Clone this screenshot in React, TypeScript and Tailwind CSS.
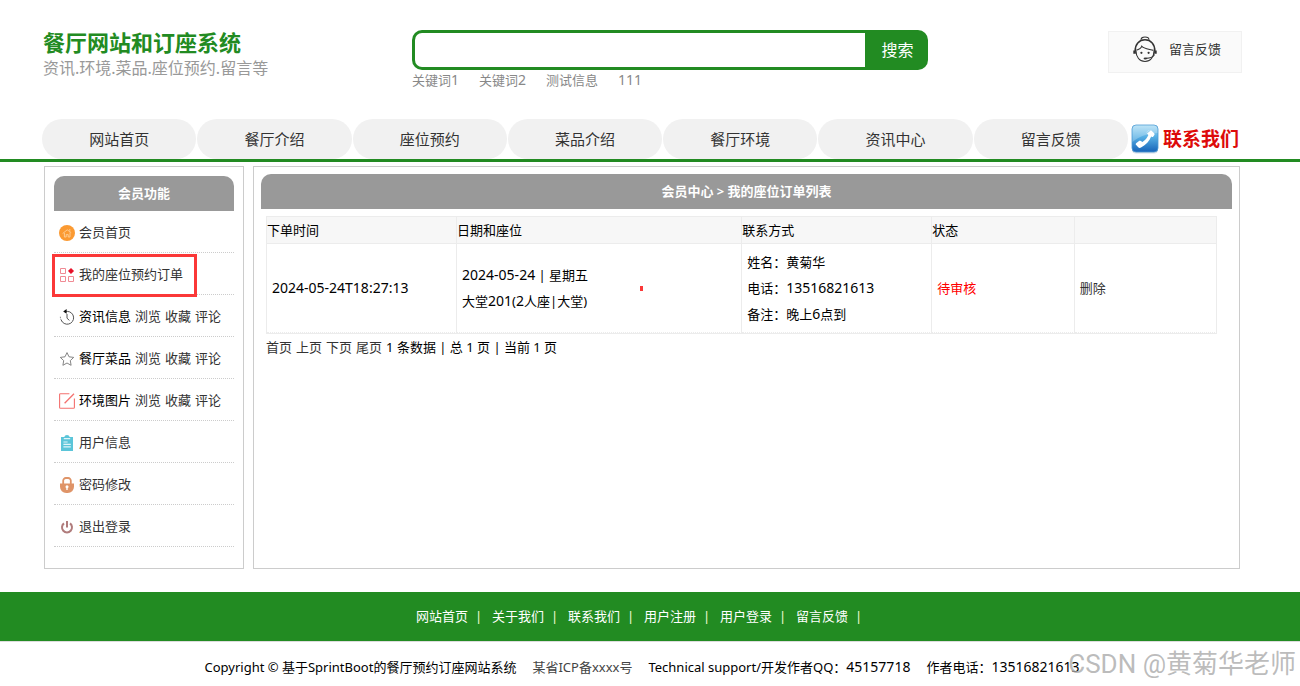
import React, { useState } from 'react';

const navItems = ['网站首页', '餐厅介绍', '座位预约', '菜品介绍', '餐厅环境', '资讯中心', '留言反馈'];
const footerLinks = ['网站首页', '关于我们', '联系我们', '用户注册', '用户登录', '留言反馈'];
const pagerLinks = ['首页', '上页', '下页', '尾页'];

interface MenuItem {
  label: string;
  icon: React.ReactNode;
  actions?: string[];
  marked?: boolean;
}

interface Order {
  createdAt: string;
  date: string;
  weekday: string;
  name: string;
  phone: string;
  status: string;
}

const orders: Order[] = [
  {
    createdAt: '2024-05-24T18:27:13',
    date: '2024-05-24',
    weekday: '星期五',
    name: '黄菊华',
    phone: '13516821613',
    status: '待审核',
  },
];

// Digits run one size up beside the Chinese text
function Num({ children }: { children: React.ReactNode }) {
  return <span className="text-[14px]">{children}</span>;
}

function HomeIcon() {
  return (
    <svg viewBox="0 0 16 16" className="h-4 w-4">
      <circle cx="8" cy="8" r="8" fill="#fb9a32" />
      <path d="M3.6 8.600 8.200 4.800l4 2.800M5.400 8v4h1.800V9.600h2V12h1.800V7.400M10.800 5.800V4" fill="none" stroke="#fdd09a" strokeWidth="0.9" />
    </svg>
  );
}

function GridIcon() {
  return (
    <svg viewBox="0 0 16 16" className="h-4 w-4" fill="none" stroke="#f08a94" strokeWidth="1">
      <path d="M1.5 1.5h5v5h-5zM1.5 9.500h5v5h-5zM9.500 9.500h5v5h-5z" />
      <path d="M12 1.200 14.800 4 12 6.800 9.200 4z" fill="#e60f28" stroke="#e60f28" strokeWidth="0.4" />
    </svg>
  );
}

function HistoryIcon() {
  return (
    <svg viewBox="0 0 16 16" className="h-4 w-4" fill="none" stroke="#555" strokeWidth="1">
      <path d="M5.5 2.4h2.8A6.4 6.4 0 1 1 2.2 11" />
      <path d="M1.4 7.8a6.4 6.4 0 0 0 .8 3.2" strokeDasharray="1 1" />
      <path d="M8 5v4.2l2.4 2.2" />
      <path d="M7.6 0v4.8L4.2 2.4z" fill="#111" stroke="none" />
    </svg>
  );
}

function StarIcon() {
  return (
    <svg viewBox="0 0 16 16" className="h-4 w-4" fill="none" stroke="#777" strokeWidth="0.9" strokeLinejoin="round">
      <path d="m8 1.6 2 4.2 4.7.6-3.4 3.2.8 4.700L8 12l-4.100 2.300.8-4.700L1.300 6.400 6 5.800z" />
    </svg>
  );
}

function EditIcon() {
  return (
    <svg viewBox="0 0 16 16" className="h-4 w-4" fill="none" stroke="#f4716f" strokeWidth="1.1">
      <path d="M10.4.7H1.5a.9.9 0 0 0-.9.9v12.8c0 .5.4.9.9.9h13c.5 0 .9-.4.9-.9V5.6" />
      <path d="M5.6 10.2 15 .8" strokeWidth="1.3" />
    </svg>
  );
}

function ClipboardIcon() {
  return (
    <svg viewBox="0 0 16 16" className="h-4 w-4">
      <path d="M2 2h3.4C5.600.8 6.600 0 8 0s2.400.8 2.600 2H14v14H2z" fill="#5bc5d9" />
      <path d="M4.800 3.600h6.400M4.400 7h4.200M4.400 9.400h7.400M4.400 11.900h7.400" stroke="#dff5f9" strokeWidth="1.1" />
    </svg>
  );
}

function LockIcon() {
  return (
    <svg viewBox="0 0 16 16" className="h-4 w-4">
      <path d="M4.200 7.400V3.600A2.600 2.600 0 0 1 6.800 1h2.400a2.600 2.600 0 0 1 2.600 2.600v3.800" fill="none" stroke="#df9468" strokeWidth="1.8" />
      <path d="M1 6.600h14v3.200a6.200 6.200 0 0 1-6.200 6.200H7.200A6.200 6.200 0 0 1 1 9.800z" fill="#df9468" />
      <circle cx="8" cy="9.800" r="1.500" fill="#fff" />
      <path d="M7.300 10h1.400v3H7.300z" fill="#fff" />
    </svg>
  );
}

function PowerIcon() {
  return (
    <svg viewBox="0 0 16 16" className="h-4 w-4" fill="none" stroke="#b07c7c" strokeWidth="2">
      <path d="M5 4.400a5 5 0 1 0 6 0M8 2v6.400" />
    </svg>
  );
}

function ServiceIcon() {
  return (
    <svg viewBox="0 0 24 28" className="h-7 w-6" fill="none" stroke="#333" strokeWidth="1.1">
      <path d="M8 3.800C8 2 9.800 1 12 1s4 1 4 2.800" />
      <path d="M2.200 15C2 8.400 6 3.800 12 3.800S22 8.400 21.800 15" strokeWidth="1.5" />
      <path d="M3 15c0 6 3.600 10.500 9 10.500S21 21 21 15" />
      <path d="M3.200 14.200c3-.6 5-2.200 5.600-4 1.600 2.400 6.600 2.800 11.800 4.200" />
      <path d="M1.600 14.400v3.400M22.400 14.400v3.400" strokeWidth="2.6" />
      <path d="M21.600 18.500c-1.500 2.600-5 3.800-8.600 3.900" />
      <circle cx="8.400" cy="16.800" r="1.1" fill="#333" stroke="none" />
      <circle cx="15.600" cy="16.800" r="1.1" fill="#333" stroke="none" />
      <ellipse cx="12.300" cy="22.500" rx="1.7" ry="1" fill="#333" stroke="none" />
    </svg>
  );
}

function PhoneIcon() {
  return (
    <svg viewBox="0 0 28 30" className="h-[30px] w-7">
      <defs>
        <linearGradient id="phoneBg" x1="0" y1="0" x2="0" y2="1">
          <stop offset="0" stopColor="#a9dcf5" />
          <stop offset="0.45" stopColor="#55aee3" />
          <stop offset="1" stopColor="#1763b8" />
        </linearGradient>
      </defs>
      <rect x="1" y="2.5" width="26" height="27" rx="4" fill="#d3dbe6" />
      <rect x="1" y="1" width="26" height="27" rx="4" fill="url(#phoneBg)" stroke="#4d9bd3" strokeWidth="0.8" />
      <path d="M1.500 5a4 4 0 0 1 4-3.600h17a4 4 0 0 1 4 3.600v4C17 9.500 8 12 1.500 18z" fill="#fff" opacity="0.25" />
      {/* handset: earpiece top right, mouthpiece bottom left */}
      <path
        d="M16 9.500c-.6-.8-.5-1.500.2-2.100l1.600-1.200c.7-.5 1.500-.4 2 .2M20.200 12.600c.7.500 1.500.5 2.100-.2l1-1.500c.5-.8.300-1.500-.4-2l-2.600-2.400c-.8-.7-1.700-.7-2.500-.1l-1.600 1.300c-.6.600-.6 1.400 0 2l1.200 1.300c-1.200 2.900-3.200 5.200-6 6.900l-1.500-.9c-.8-.4-1.500-.3-2.200.2l-2.300 1.700c-.8.6-.9 1.500-.2 2.200l2 2.100c.8.800 1.800.9 2.800.3 5-2.700 8.400-6.200 10.200-10.900z"
        fill="#fff"
      />
    </svg>
  );
}

const menuItems: MenuItem[] = [
  { label: '会员首页', icon: <HomeIcon /> },
  { label: '我的座位预约订单', icon: <GridIcon />, marked: true },
  { label: '资讯信息', icon: <HistoryIcon />, actions: ['浏览', '收藏', '评论'] },
  { label: '餐厅菜品', icon: <StarIcon />, actions: ['浏览', '收藏', '评论'] },
  { label: '环境图片', icon: <EditIcon />, actions: ['浏览', '收藏', '评论'] },
  { label: '用户信息', icon: <ClipboardIcon /> },
  { label: '密码修改', icon: <LockIcon /> },
  { label: '退出登录', icon: <PowerIcon /> },
];

function Header() {
  const [keyword, setKeyword] = useState('');

  return (
    <header className="border-b-[3px] border-[#228b22] pr-4">
      <div className="mx-auto max-w-[1200px]">
        <div className="flex h-[119px] items-start pt-[30px]">
          <div className="w-[370px] pl-px">
            <h1 className="text-[22px] font-bold leading-6 text-[#228b22]">餐厅网站和订座系统</h1>
            <p className="text-[16px] leading-7 text-[#999]">资讯.环境.菜品.座位预约.留言等</p>
          </div>
          <div>
            <form className="flex h-10" onSubmit={(e) => e.preventDefault()}>
              <input
                type="text"
                aria-label="搜索"
                value={keyword}
                onChange={(e) => setKeyword(e.target.value)}
                className="w-[453px] rounded-l-[10px] border-[3px] border-r-0 border-[#228b22] px-2 text-[14px] outline-none"
              />
              <button type="submit" className="w-[63px] rounded-r-[10px] bg-[#228b22] pl-0.5 text-[16px] text-white">
                搜索
              </button>
            </form>
            <div className="flex gap-5 leading-5 text-[#888]">
              <a href="#">关键词<Num>1</Num></a>
              <a href="#">关键词<Num>2</Num></a>
              <a href="#">测试信息</a>
              <a href="#"><Num>111</Num></a>
            </div>
          </div>
          <a
            href="#"
            className="mt-px ml-auto flex h-[42px] w-[134px] items-center gap-3 border border-[#f1f1f1] bg-[#fafafa] pb-1 pl-6 text-[#333]"
          >
            <ServiceIcon />
            留言反馈
          </a>
        </div>
        <nav className="flex h-10">
          <div className="flex flex-1 gap-px text-[15px] text-[#333]">
            {navItems.map((item) => (
              <a key={item} href="#" className="flex flex-1 items-center justify-center rounded-full bg-[#f1f1f1]">
                {item}
              </a>
            ))}
          </div>
          <a href="#" className="flex w-[114px] items-center gap-1 pl-[3px] text-[19px] font-bold text-[#dd0a0a]">
            <PhoneIcon />
            联系我们
          </a>
        </nav>
      </div>
    </header>
  );
}

function Sidebar() {
  return (
    <aside className="w-[200px] border border-[#ccc] p-[9px] pb-[21px]">
      <h2 className="rounded-t-[10px] bg-[#999] text-center font-bold leading-[35px] text-white">会员功能</h2>
      <ul>
        {menuItems.map(({ label, icon, actions, marked }) => (
          <li key={label} className="relative flex h-[42px] items-center gap-1 border-b border-dotted border-[#ccc] pt-[3px] pl-[5px]">
            {icon}
            {actions ? (
              <>
                <span className="text-black">{label}</span>
                {actions.map((action) => (
                  <a key={action} href="#" className="text-[#333]">{action}</a>
                ))}
              </>
            ) : (
              <a href="#" className="text-[#333]">{label}</a>
            )}
            {marked && <span className="absolute top-px -left-0.5 h-[43px] w-[145px] border-[3px] border-[#fb3838]" />}
          </li>
        ))}
      </ul>
    </aside>
  );
}

function OrderTable() {
  return (
    <table className="w-[99%] table-fixed border-separate border-spacing-0 border border-r-0 border-[#ececec] leading-[26px] text-black">
      <thead>
        <tr className="bg-[#f7f7f7] text-left [&>th]:border-r [&>th]:border-b [&>th]:border-[#ececec] [&>th]:font-normal">
          <th className="w-[20%]">下单时间</th>
          <th className="w-[30%]">日期和座位</th>
          <th className="w-[20%]">联系方式</th>
          <th className="w-[15%]">状态</th>
          <th className="w-[15%]" aria-label="操作" />
        </tr>
      </thead>
      <tbody>
        {orders.map((order) => (
          <tr
            key={order.createdAt}
            className="[&>td]:border-r [&>td]:border-b [&>td]:border-[#ececec] [&>td]:[border-bottom-style:dotted] [&>td]:p-[5px]"
          >
            <td><Num>{order.createdAt}</Num></td>
            <td className="relative">
              <Num>{order.date}</Num> | {order.weekday}
              <br />
              大堂<Num>201</Num>(<Num>2</Num>人座|大堂)
              <span className="absolute top-[42px] right-[98px] h-[5px] w-[3px] bg-[#fb3838]" />
            </td>
            <td>
              <p>姓名：{order.name}</p>
              <p>电话：<Num>{order.phone}</Num></p>
              <p>备注：晚上<Num>6</Num>点到</p>
            </td>
            <td className="text-[#f00]">{order.status}</td>
            <td><a href="#" className="text-[#333]">删除</a></td>
          </tr>
        ))}
      </tbody>
    </table>
  );
}

function Content() {
  return (
    <section className="flex-1 border border-[#ccc] p-[7px]">
      <h2 className="rounded-t-[10px] bg-[#999] text-center font-bold leading-[35px] text-white">会员中心 &gt; 我的座位订单列表</h2>
      <div className="px-[5px] pt-[7px]">
        <OrderTable />
        <div className="flex gap-1 leading-[26px] text-black">
          {pagerLinks.map((link) => (
            <a key={link} href="#" className="text-[#333]">{link}</a>
          ))}
          <span>1 条数据 | 总 1 页 | 当前 1 页</span>
        </div>
      </div>
    </section>
  );
}

function Footer() {
  return (
    <footer>
      <div className="flex h-[50px] items-center justify-center border-b border-[#ddd] bg-[#228b22] pr-3 text-white">
        {footerLinks.map((link) => (
          <span key={link} className="flex w-[76px] gap-[7px]">
            <a href="#">{link}</a>
            <span className="text-[#fafad2]">|</span>
          </span>
        ))}
      </div>
      <div className="flex justify-center gap-4 pt-3 pr-4 leading-[26px] text-black">
        <span>Copyright © 基于SprintBoot的餐厅预约订座网站系统</span>
        <a href="#" className="text-[#444]">某省ICP备xxxx号</a>
        <span>Technical support/开发作者QQ：<Num>45157718</Num></span>
        <span>作者电话：<Num>13516821613</Num></span>
      </div>
    </footer>
  );
}

export default function App() {
  return (
    <div className="relative min-h-screen overflow-hidden bg-white font-['Noto_Sans','Noto_Sans_CJK_SC',sans-serif] text-[13px]">
      <Header />
      <main className="pt-1 pr-4 pb-[23px]">
        <div className="mx-auto flex max-w-[1200px] gap-[9px] px-0.5">
          <Sidebar />
          <Content />
        </div>
      </main>
      <Footer />
      <span className="absolute right-1 bottom-1 font-['Roboto','Noto_Sans_CJK_SC',sans-serif] text-[26px] leading-9 text-[#aaa]/80">
        CSDN @黄菊华老师
      </span>
    </div>
  );
}
